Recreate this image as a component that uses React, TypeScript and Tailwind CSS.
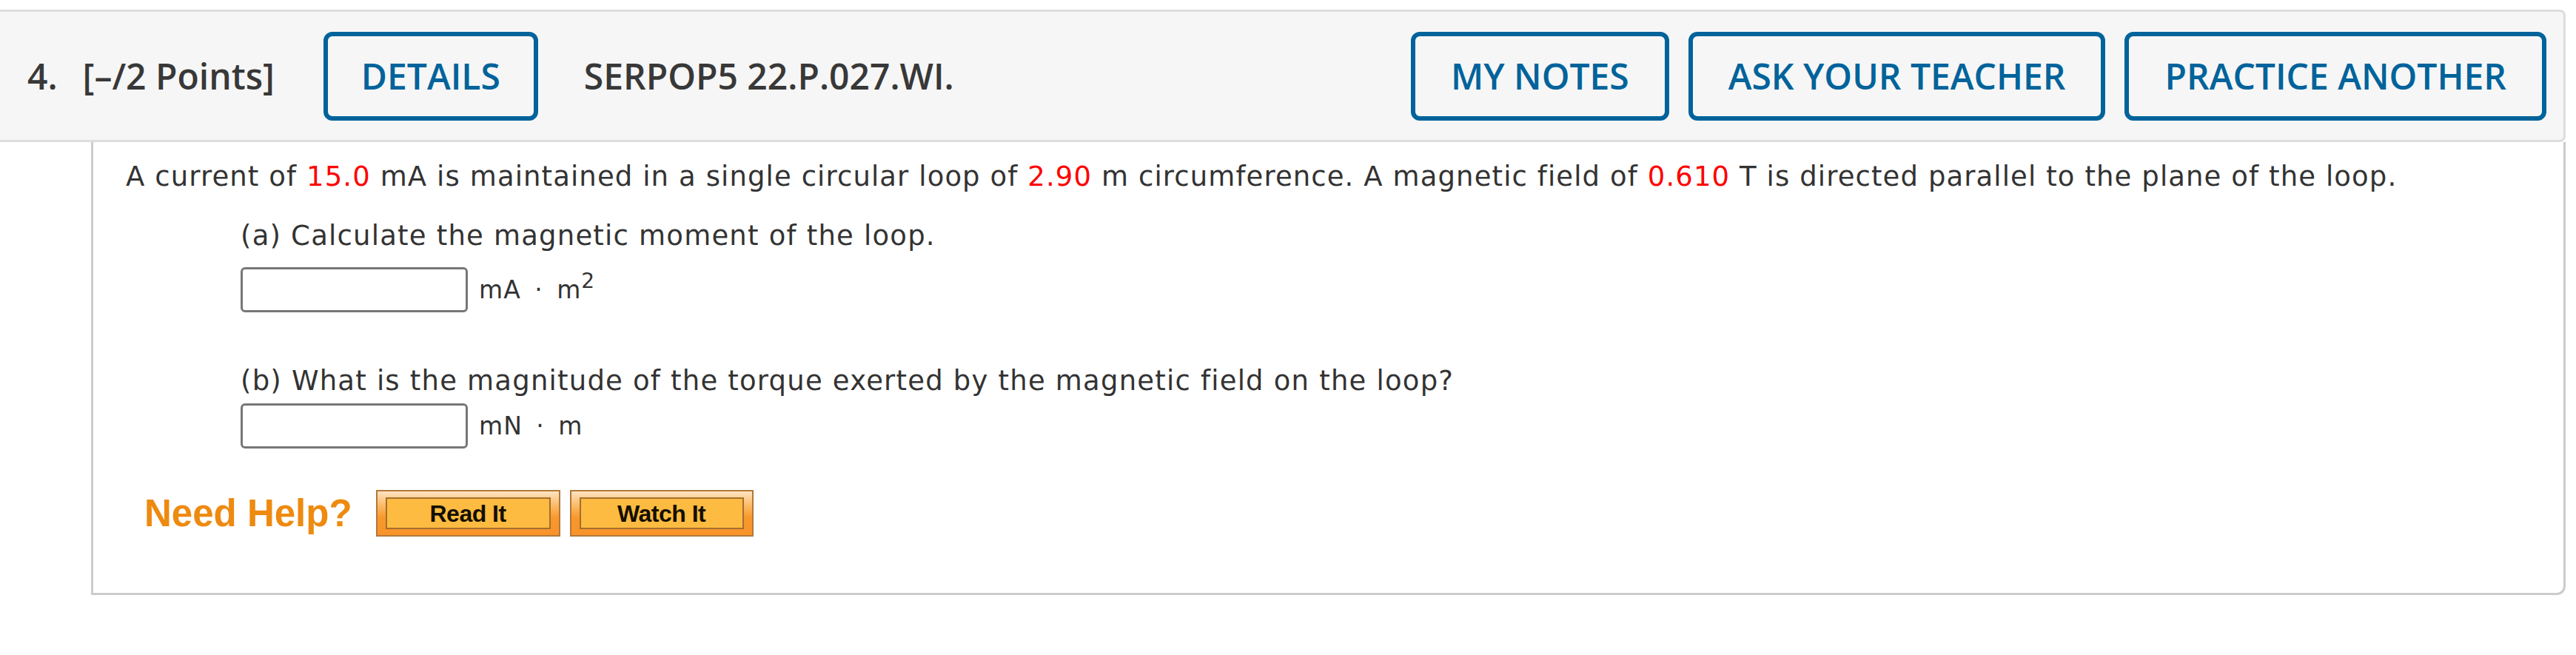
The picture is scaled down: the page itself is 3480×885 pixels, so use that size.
import React from 'react';

const headerFont = { fontFamily: '"Open Sans", "Liberation Sans", sans-serif' };
const bodyFont = { fontFamily: '"DejaVu Sans", Verdana, sans-serif' };
const arialFont = { fontFamily: '"Liberation Sans", Arial, sans-serif' };

const OutlineButton: React.FC<{ label: string; pad?: string }> = ({ label, pad = 'px-[48px]' }) => (
  <button
    type="button"
    className={`flex h-[120px] items-center justify-center rounded-[12px] border-[6px] border-[#00639b] bg-transparent ${pad} text-[48px] font-semibold leading-none text-[#00639b]`}
    style={headerFont}
  >
    {label}
  </button>
);

const HelpButton: React.FC<{ label: string; width: string }> = ({ label, width }) => (
  <div
    className={`${width} flex h-[63px] border-2 border-[#b3783a] bg-[linear-gradient(180deg,#fde4c2_0%,#fbb760_35%,#f8982c_60%,#f7932a_100%)] px-[11px] py-[8px]`}
  >
    <div
      className="flex flex-1 items-center justify-center border-2 border-[#a66f2e] bg-[#fdbb41] text-[32px] font-bold leading-none tracking-[-0.5px] text-[#140f00]"
      style={arialFont}
    >
      {label}
    </div>
  </div>
);

const Red: React.FC<{ children: React.ReactNode }> = ({ children }) => (
  <span className="text-[#ff0000]">{children}</span>
);

const AnswerRow: React.FC<{ children: React.ReactNode }> = ({ children }) => (
  <div className="flex items-center">
    <div className="h-[61px] w-[307px] rounded-[6px] border-[3px] border-[#777777] bg-white" />
    <span className="ml-[15px] text-[33px] leading-none tracking-[1px] text-[#333333]" style={bodyFont}>
      {children}
    </span>
  </div>
);

export default function App() {
  return (
    <div className="min-h-[885px] w-[3480px] bg-white pr-[14px] pt-[13px]">
      <div className="flex h-[179px] items-center rounded-r-[8px] border-y-[3px] border-r-[3px] border-[#dddddd] bg-[#f6f6f6] pl-[37px] pr-[23px]">
        <div className="flex items-center text-[48px] font-semibold leading-none text-[#383838]" style={headerFont}>
          <span>4.</span>
          <span className="ml-[34px]">[–/2 Points]</span>
        </div>
        <div className="ml-[66px]">
          <OutlineButton label="DETAILS" pad="px-[45px]" />
        </div>
        <div className="ml-[62px] text-[48px] font-semibold leading-none text-[#383838]" style={headerFont}>
          SERPOP5 22.P.027.WI.
        </div>
        <div className="ml-auto flex gap-[26px]">
          <OutlineButton label="MY NOTES" />
          <OutlineButton label="ASK YOUR TEACHER" />
          <OutlineButton label="PRACTICE ANOTHER" />
        </div>
      </div>

      <div className="ml-[123px] rounded-br-[12px] border-x-[3px] border-b-[3px] border-[#cccccc] pb-[76px] pl-[44px] pt-[20px]">
        <p className="text-[37px] leading-[54px] tracking-[1.1px] text-[#333333]" style={bodyFont}>
          A current of <Red>15.0</Red> mA is maintained in a single circular loop of <Red>2.90</Red> m circumference. A
          magnetic field of <Red>0.610</Red> T is directed parallel to the plane of the loop.
        </p>

        <div className="ml-[155px]">
          <p className="mt-[26px] text-[37px] leading-[54px] tracking-[1.2px] text-[#333333]" style={bodyFont}>
            (a) Calculate the magnetic moment of the loop.
          </p>
          <div className="mt-[15px]">
            <AnswerRow>
              mA <span className="mx-[7px]">·</span> m<sup className="relative -top-[14px] text-[28px]">2</sup>
            </AnswerRow>
          </div>

          <p className="mt-[66px] text-[37px] leading-[54px] tracking-[1.2px] text-[#333333]" style={bodyFont}>
            (b) What is the magnitude of the torque exerted by the magnetic field on the loop?
          </p>
          <div className="mt-[3px]">
            <AnswerRow>
              mN <span className="mx-[7px]">·</span> m
            </AnswerRow>
          </div>
        </div>

        <div className="mt-[56px] flex items-center pl-[25px]">
          <span className="text-[51px] font-bold leading-none text-[#ee8a10]" style={arialFont}>
            Need Help?
          </span>
          <div className="ml-[32px] flex gap-[13px]">
            <HelpButton label="Read It" width="w-[249px]" />
            <HelpButton label="Watch It" width="w-[248px]" />
          </div>
        </div>
      </div>
    </div>
  );
}
